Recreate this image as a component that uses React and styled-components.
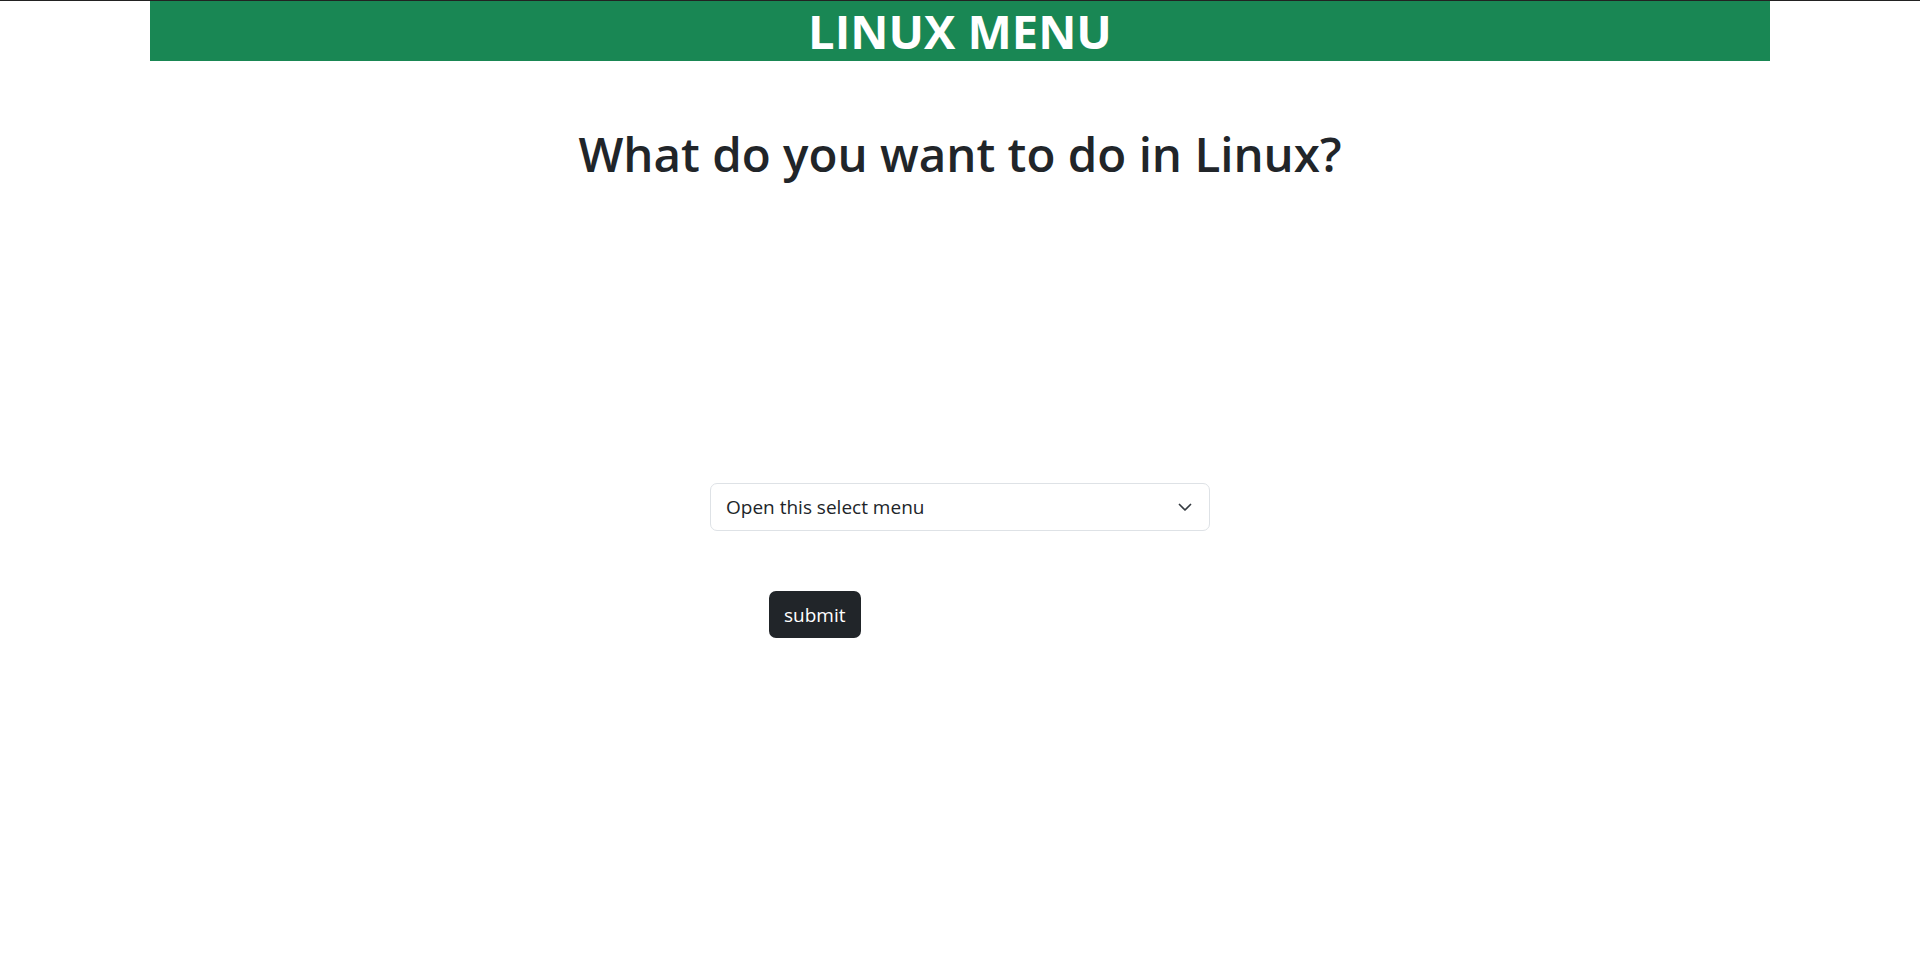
import React from 'react';
import styled, { createGlobalStyle } from 'styled-components';

const GlobalStyle = createGlobalStyle`
  body {
    margin: 0;
    background: #fff;
    border-top: 1px solid #222;
    font-family: "Open Sans", "Noto Sans", "Liberation Sans", sans-serif;
    color: #212529;
  }
`;

const Header = styled.header`
  width: 1620px;
  height: 60px;
  margin: 0 auto;
  background-color: #198754;
  display: flex;
  align-items: center;
  justify-content: center;
`;

const Brand = styled.h1`
  margin: 0;
  color: #fff;
  font-size: 47px;
  font-weight: 700;
  line-height: 60px;
`;

const Main = styled.main`
  display: flex;
  flex-direction: column;
  align-items: center;
`;

const Question = styled.h1`
  margin: 63px 0 0;
  font-size: 47.5px;
  font-weight: 600;
  line-height: 60px;
  color: #212529;
`;

const Form = styled.form`
  width: 500px;
  margin-top: 299px;
  display: flex;
  flex-direction: column;
  align-items: flex-start;
  gap: 60px;
`;

const SelectWrap = styled.div`
  position: relative;
  width: 100%;
`;

const Select = styled.select`
  appearance: none;
  width: 100%;
  height: 48px;
  box-sizing: border-box;
  padding: 0 56px 0 15px;
  border: 1px solid #dee2e6;
  border-radius: 7px;
  background: #fff;
  font-family: inherit;
  font-size: 19px;
  color: #212529;
  outline: none;
`;

const Chevron = styled.svg`
  position: absolute;
  right: 17px;
  top: 18px;
  width: 16px;
  height: 12px;
  pointer-events: none;
`;

const SubmitButton = styled.button`
  margin-left: 59px;
  height: 47px;
  padding: 0 15px;
  border: none;
  border-radius: 7px;
  background: #212529;
  color: #fff;
  font-family: inherit;
  font-size: 19px;
  cursor: pointer;
`;

const App = () => {
  return (
    <React.Fragment>
      <GlobalStyle />
      <Header>
        <Brand>LINUX MENU</Brand>
      </Header>
      <Main>
        <Question>What do you want to do in Linux?</Question>
        <Form onSubmit={(e) => e.preventDefault()}>
          <SelectWrap>
            <Select defaultValue="">
              <option value="">Open this select menu</option>
              <option value="1">date</option>
              <option value="2">cal</option>
              <option value="3">ls</option>
            </Select>
            <Chevron viewBox="0 0 16 12">
              <path d="M2.5 3.5l5.5 5.5 5.5-5.5" fill="none" stroke="#343a40" strokeWidth="1.7" strokeLinecap="round" strokeLinejoin="round" />
            </Chevron>
          </SelectWrap>
          <SubmitButton type="submit">submit</SubmitButton>
        </Form>
      </Main>
    </React.Fragment>
  );
};

export default App;
